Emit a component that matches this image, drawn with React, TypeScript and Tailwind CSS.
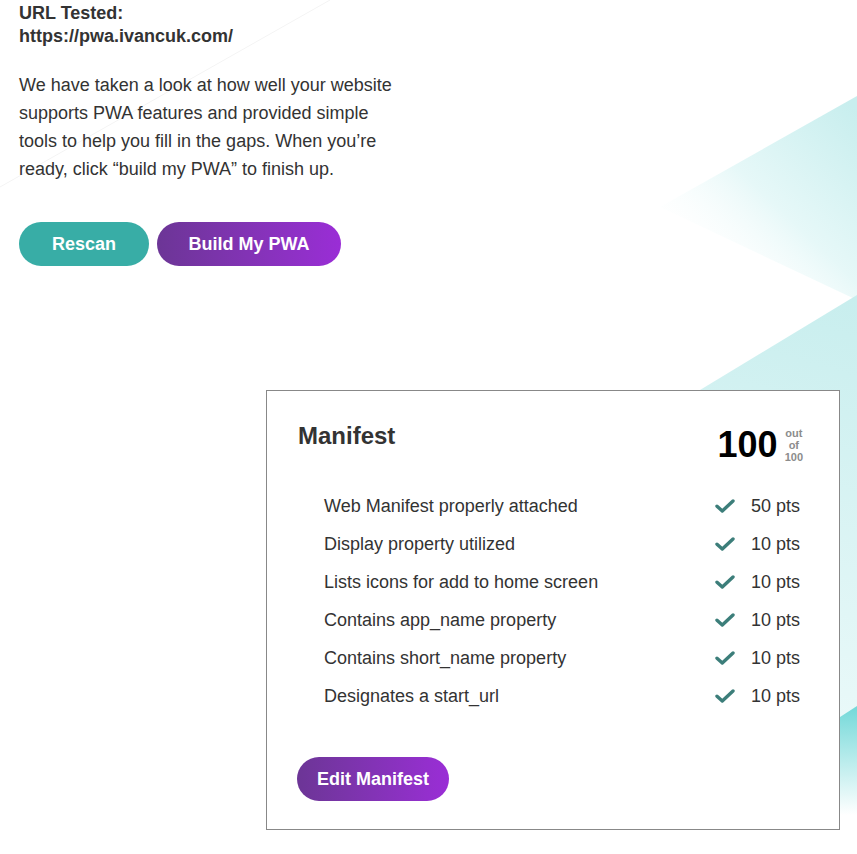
import React from "react";

const rows: [string, string][] = [
  ["Web Manifest properly attached", "50 pts"],
  ["Display property utilized", "10 pts"],
  ["Lists icons for add to home screen", "10 pts"],
  ["Contains app_name property", "10 pts"],
  ["Contains short_name property", "10 pts"],
  ["Designates a start_url", "10 pts"],
];

function Check() {
  return (
    <svg width="20" height="14" viewBox="0 0 20 14" className="block">
      <path d="M2 7.2 L7.3 12 L18 2" fill="none" stroke="#3c7e7a" strokeWidth="3.4" strokeLinecap="round" strokeLinejoin="round" />
    </svg>
  );
}

function Background() {
  return (
    <svg className="absolute inset-0 pointer-events-none" width="857" height="854" viewBox="0 0 857 854">
      <defs>
        <linearGradient id="g1" gradientUnits="userSpaceOnUse" x1="857" y1="110" x2="700" y2="275">
          <stop offset="0" stopColor="#c8eeee" />
          <stop offset="0.55" stopColor="#e6f8f8" />
          <stop offset="1" stopColor="#ffffff" stopOpacity="0" />
        </linearGradient>
        <linearGradient id="g2" gradientUnits="userSpaceOnUse" x1="857" y1="300" x2="740" y2="700">
          <stop offset="0" stopColor="#c8eeee" />
          <stop offset="1" stopColor="#eaf9f9" />
        </linearGradient>
        <linearGradient id="g3" gradientUnits="userSpaceOnUse" x1="0" y1="710" x2="0" y2="815">
          <stop offset="0" stopColor="#78dada" />
          <stop offset="1" stopColor="#ffffff" />
        </linearGradient>
      </defs>
      <line x1="330" y1="0" x2="0" y2="187" stroke="#f4f4f4" strokeWidth="1" />
      <polygon points="660,207 857,96 857,300" fill="url(#g1)" />
      <polygon points="700,390 857,295 857,722 780,722" fill="url(#g2)" />
      <polygon points="820,730 857,706 857,830 820,830" fill="url(#g3)" />
    </svg>
  );
}

export default function App() {
  return (
    <div
      className="relative w-full h-[854px] overflow-hidden bg-white text-[#333]"
      style={{ fontFamily: '"Liberation Sans", Arial, Helvetica, sans-serif' }}
    >
      <Background />
      <div className="relative flex flex-col pl-[19px] pt-[2px]">
        <div className="font-bold text-[18px] leading-[23px] text-[#333]">
          <div>URL Tested:</div>
          <div>https://pwa.ivancuk.com/</div>
        </div>
        <p className="mt-[23px] text-[18px] leading-[28px] text-[#333] w-[382px]">
          We have taken a look at how well your website supports PWA features and provided simple tools to help you fill in the gaps. When you’re ready, click “build my PWA” to finish up.
        </p>
        <div className="mt-[39px] flex gap-[8px]">
          <button className="h-[44px] w-[130px] rounded-full bg-[#38ada6] text-white font-bold text-[18px]">
            Rescan
          </button>
          <button className="h-[44px] w-[184px] rounded-full bg-gradient-to-r from-[#6c3596] to-[#9a2dd6] text-white font-bold text-[18px]">
            Build My PWA
          </button>
        </div>

        <div className="mt-[124px] ml-[247px] w-[574px] h-[440px] border border-[#888] bg-white pl-[31px] pr-[39px] pt-[27px] flex flex-col">
          <div className="flex justify-between items-start">
            <h2 className="font-bold text-[24px] leading-[32px] text-[#333] mt-[2px]">Manifest</h2>
            <div className="flex items-center gap-[7px] mr-[-3px] mt-[9px]">
              <span className="font-bold text-[36px] leading-[36px] text-black">100</span>
              <span className="flex flex-col items-center font-bold text-[11px] leading-[12px] text-[#8c8c8c]">
                <span>out</span>
                <span>of</span>
                <span>100</span>
              </span>
            </div>
          </div>
          <div className="mt-[24px] ml-[26px] flex flex-col">
            {rows.map(([label, pts]) => (
              <div key={label} className="h-[38px] flex items-center text-[18px] text-[#333]">
                <span className="flex-1">{label}</span>
                <span className="w-[36px]"><Check /></span>
                <span className="w-[49px] whitespace-nowrap">{pts}</span>
              </div>
            ))}
          </div>
          <div className="mt-[42px]">
            <button className="h-[44px] w-[152px] -ml-[1px] rounded-full bg-gradient-to-r from-[#6c3596] to-[#9a2dd6] text-white font-bold text-[18px]">
              Edit Manifest
            </button>
          </div>
        </div>
      </div>
    </div>
  );
}
